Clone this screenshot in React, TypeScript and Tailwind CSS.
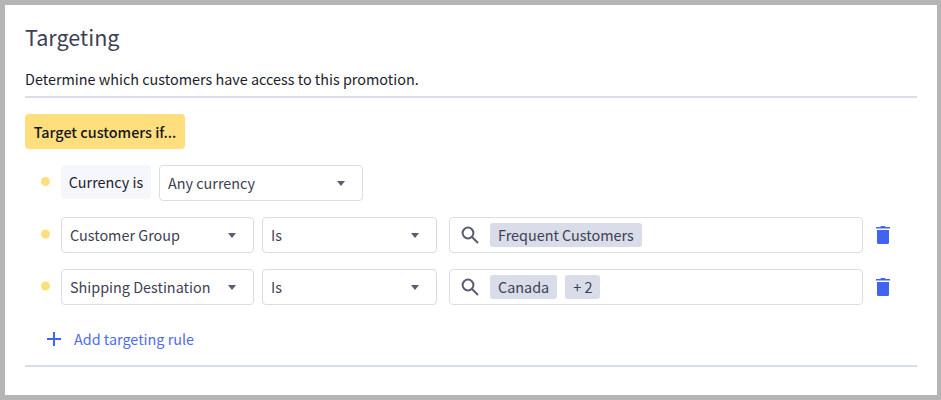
const Caret = () => (
  <svg width="8" height="5" viewBox="0 0 8 5" className="shrink-0">
    <path d="M0 0h8L4 5z" fill="#5a5d72" />
  </svg>
);

const Select = ({ label, className }: { label: string; className: string }) => (
  <div className={`flex h-9 items-center justify-between rounded border border-[#d9dce9] bg-white pl-2 pr-[17px] text-[#3d3f52] ${className}`}>
    <span className="whitespace-nowrap">{label}</span>
    <Caret />
  </div>
);

const Search = () => (
  <svg width="18" height="18" viewBox="0 0 18 18" fill="none" stroke="#5a5d72" strokeWidth="2" className="shrink-0">
    <circle cx="7" cy="7" r="5.4" />
    <path d="M11 11l6 6" />
  </svg>
);

const Trash = () => (
  <svg width="14" height="18" viewBox="0 0 14 18" className="shrink-0">
    <path d="M5 0h4l.6 1H14v1.4H0V1h4.4z M1 4h12v12.5a1.5 1.5 0 0 1-1.5 1.5h-9A1.5 1.5 0 0 1 1 16.500z" fill="#4063f0" />
  </svg>
);

const Chip = ({ label }: { label: string }) => (
  <span className="flex h-6 items-center whitespace-nowrap rounded-[3px] bg-[#d9dce9] px-2 text-[#3d3f52]">{label}</span>
);

const Dot = () => <span className="h-[9px] w-[9px] shrink-0 rounded-full bg-[#ffdf7d]" />;

const Rule = ({ first, chips }: { first: string; chips: string[] }) => (
  <div className="flex items-center">
    <div className="flex w-9 shrink-0 -translate-y-[1.5px] justify-start pl-4">
      <Dot />
    </div>
    <Select label={first} className="w-[193px]" />
    <Select label="Is" className="ml-2 w-[175px]" />
    <div className="ml-3 flex h-9 w-[414px] items-center rounded border border-[#d9dce9] bg-white pl-[11px]">
      <Search />
      <div className="ml-[11px] flex gap-2">
        {chips.map((c) => (
          <Chip key={c} label={c} />
        ))}
      </div>
    </div>
    <div className="ml-[13px]">
      <Trash />
    </div>
  </div>
);

export default function App() {
  return (
    <div className="h-[400px] w-[941px] bg-[#b5b5b5] pb-[5px] pl-[5px] pr-1 pt-[5px] [font-family:'Noto_Sans_CJK_SC','Noto_Sans',sans-serif] text-[14.4px] leading-6">
      <div className="h-full bg-white px-5">
        <h1 className="pt-[17px] text-[21.6px] leading-[30px] text-[#3d3f52]">Targeting</h1>
        <p className="mt-[15px] text-[#1c1d2b]">Determine which customers have access to this promotion.</p>
        <div className="mt-[5px] h-0.5 bg-[#d9dce9]" />
        <div className="mt-4 flex h-[35px] w-40 items-center justify-center whitespace-nowrap rounded bg-[#ffdf7d] font-medium text-[#14151f]">
          Target customers if...
        </div>
        <div className="mt-4 flex items-start">
          <div className="flex w-9 shrink-0 pl-4 pt-3">
            <Dot />
          </div>
          <div className="flex h-[34px] w-[90px] items-center justify-center rounded bg-[#f6f7fc] text-[#1c1d2b]">Currency is</div>
          <Select label="Any currency" className="ml-2 w-[204px]" />
        </div>
        <div className="mt-4 flex flex-col gap-4">
          <Rule first="Customer Group" chips={["Frequent Customers"]} />
          <Rule first="Shipping Destination" chips={["Canada", "+ 2"]} />
        </div>
        <div className="mt-[22px] flex items-center pl-[22px] text-[#4f6bf0]">
          <svg width="14" height="14" viewBox="0 0 14 14" className="shrink-0">
            <path d="M6 0h2v6h6v2H8v6H6V8H0V6h6z" fill="#4063f0" />
          </svg>
          <span className="ml-[13px]">Add targeting rule</span>
        </div>
        <div className="mt-[14px] h-0.5 bg-[#d9dce9]" />
      </div>
    </div>
  );
}
